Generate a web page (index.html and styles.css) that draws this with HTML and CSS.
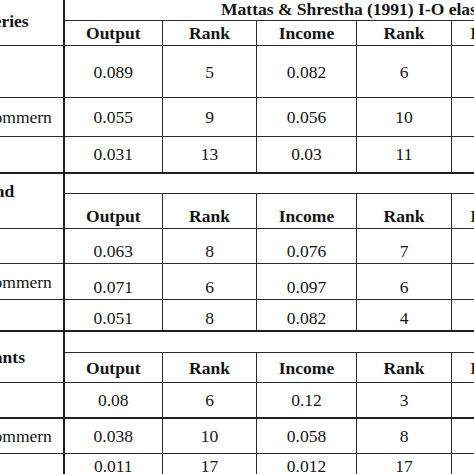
FILE: index.html
```html
<!DOCTYPE html>
<html lang="en">
<head>
<meta charset="utf-8">
<title>I-O elasticities</title>
<link rel="stylesheet" href="styles.css">
</head>
<body>
<table class="elas">
  <colgroup>
    <col class="c-label">
    <col class="c-output">
    <col class="c-rank-a">
    <col class="c-income">
    <col class="c-rank-b">
    <col class="c-emp">
    <col class="c-rank-c">
  </colgroup>
  <tbody class="sec sec-1">
    <tr class="r-title">
      <th class="lab-head" rowspan="2">Sea &amp; coastal fisheries</th>
      <th class="title" colspan="6">Mattas &amp; Shrestha (1991) I-O elasticities</th>
    </tr>
    <tr class="r-sub">
      <th>Output</th><th>Rank</th><th>Income</th><th>Rank</th><th>Employment</th><th>Rank</th>
    </tr>
    <tr class="r-1">
      <td class="lab">Schleswig-<br>Holstein</td><td>0.089</td><td>5</td><td>0.082</td><td>6</td><td></td><td></td>
    </tr>
    <tr class="r-2">
      <td class="lab">Mecklenburg-Vorpommern</td><td>0.055</td><td>9</td><td>0.056</td><td>10</td><td></td><td></td>
    </tr>
    <tr class="r-3">
      <td class="lab">Lower Saxony</td><td>0.031</td><td>13</td><td>0.03</td><td>11</td><td></td><td></td>
    </tr>
  </tbody>
  <tbody class="sec sec-2">
    <tr class="r-title">
      <th class="lab-head" rowspan="2">Food processing and<br>marketing</th>
      <th class="blank" colspan="6"></th>
    </tr>
    <tr class="r-sub">
      <th>Output</th><th>Rank</th><th>Income</th><th>Rank</th><th>Employment</th><th>Rank</th>
    </tr>
    <tr class="r-1">
      <td class="lab">Schleswig-Holstein</td><td>0.063</td><td>8</td><td>0.076</td><td>7</td><td></td><td></td>
    </tr>
    <tr class="r-2">
      <td class="lab">Mecklenburg-Vorpommern</td><td>0.071</td><td>6</td><td>0.097</td><td>6</td><td></td><td></td>
    </tr>
    <tr class="r-3">
      <td class="lab">Lower Saxony</td><td>0.051</td><td>8</td><td>0.082</td><td>4</td><td></td><td></td>
    </tr>
  </tbody>
  <tbody class="sec sec-3">
    <tr class="r-title">
      <th class="lab-head" rowspan="2">Cafés and restaurants</th>
      <th class="blank" colspan="6"></th>
    </tr>
    <tr class="r-sub">
      <th>Output</th><th>Rank</th><th>Income</th><th>Rank</th><th>Employment</th><th>Rank</th>
    </tr>
    <tr class="r-1">
      <td class="lab">Schleswig-Holstein</td><td>0.08</td><td>6</td><td>0.12</td><td>3</td><td></td><td></td>
    </tr>
    <tr class="r-2">
      <td class="lab">Mecklenburg-Vorpommern</td><td>0.038</td><td>10</td><td>0.058</td><td>8</td><td></td><td></td>
    </tr>
    <tr class="r-3">
      <td class="lab">Lower Saxony</td><td>0.011</td><td>17</td><td>0.012</td><td>17</td><td></td><td></td>
    </tr>
  </tbody>
</table>
</body>
</html>
```
FILE: styles.css
```css
html, body {
  margin: 0;
  padding: 0;
  background: #ffffff;
  overflow: hidden;
}

.elas {
  border-collapse: collapse;
  table-layout: fixed;
  width: 832px;
  margin: -4px 0 0 -150px;
  font-family: "Liberation Serif", "Times New Roman", serif;
  font-size: 17.5px;
  color: #141414;
}

.c-label { width: 213px; }
.c-output { width: 99px; }
.c-rank-a { width: 94px; }
.c-income { width: 100px; }
.c-rank-b { width: 95px; }
.c-emp { width: 134px; }
.c-rank-c { width: 97px; }

.elas th,
.elas td {
  border: 1px solid #2c2c2c;
  padding: 0;
  text-align: center;
  vertical-align: middle;
  line-height: 20px;
  white-space: nowrap;
}

.elas th {
  font-weight: bold;
}

.elas .lab,
.elas .lab-head {
  text-align: left;
  padding-left: 10px;
  border-right: 2px solid #1f1f1f;
}

.elas .title {
  text-align: center;
}

.sec + .sec > tr:first-child > * {
  border-top: 2px solid #1f1f1f;
}

/* section 1 */
.sec-1 .r-title { height: 24px; }
.sec-1 .r-sub { height: 25px; }
.sec-1 .r-1 { height: 52px; }
.sec-1 .r-2 { height: 39px; }
.sec-1 .r-3 { height: 36px; }

/* section 2 */
.sec-2 .r-title { height: 21px; }
.sec-2 .r-sub { height: 35px; }
.sec-2 .r-1 { height: 35px; }
.sec-2 .r-2 { height: 36px; }
.sec-2 .r-3 { height: 31px; }

.sec-2 .r-sub > th,
.sec-2 td:not(.lab) {
  vertical-align: bottom;
  padding-bottom: 2px;
}

/* section 3 */
.sec-3 .r-title { height: 22px; }
.sec-3 .r-sub { height: 30px; }
.sec-3 .r-1 { height: 35px; }
.sec-3 .r-2 { height: 36px; }
.sec-3 .r-3 { height: 24px; }

.sec-3 .r-2 > * {
  border-top: 2px solid #1f1f1f;
}
```
